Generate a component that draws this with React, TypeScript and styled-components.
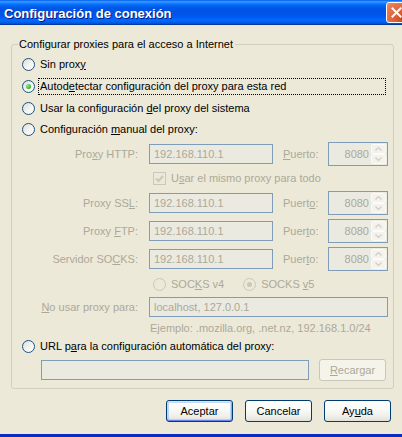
import React from 'react';
import styled, { createGlobalStyle } from 'styled-components';

const GlobalStyle = createGlobalStyle`
  html, body {
    margin: 0;
    padding: 0;
    background: #ECE9D8;
  }
  body {
    font-family: "Liberation Sans", Arial, sans-serif;
    font-size: 11px;
  }
`;

const Dialog = styled.div`
  width: 402px;
  height: 437px;
  box-sizing: border-box;
  overflow: hidden;
  display: flex;
  flex-direction: column;
  background: #ECE9D8;
  border-bottom: 3px solid #0A2BC4;
`;

const TitleBar = styled.div`
  flex-shrink: 0;
  height: 25px;
  display: flex;
  align-items: center;
  justify-content: space-between;
  padding-left: 4px;
  background: linear-gradient(
    180deg,
    #0058EE 0%,
    #3593FF 6%,
    #288EFF 10%,
    #127DFF 14%,
    #036FFC 18%,
    #0262EE 24%,
    #0057E5 32%,
    #0054E3 40%,
    #0055EB 60%,
    #005BF5 70%,
    #026AFE 80%,
    #0062EF 88%,
    #0052D6 94%,
    #0040AB 97%,
    #003092 100%
  );
`;

const Title = styled.span`
  font-family: "Liberation Sans", Arial, sans-serif;
  font-weight: bold;
  font-size: 13px;
  color: #FFFFFF;
  text-shadow: 1px 1px 0 #0A1883;
  padding-top: 1px;
`;

const CloseButton = styled.div`
  flex-shrink: 0;
  width: 21px;
  height: 21px;
  box-sizing: border-box;
  margin-right: -5px;
  border: 1px solid #FFFFFF;
  border-radius: 3px;
  display: flex;
  align-items: center;
  justify-content: center;
  background: radial-gradient(circle at 85% 85%, #C24A1E 0%, #E0643B 45%, #EC8A68 100%);
`;

const Body = styled.div`
  flex: 1;
  display: flex;
  flex-direction: column;
  padding-top: 13px;
`;

const GroupBox = styled.fieldset`
  margin: 0 0 0 11px;
  width: 383px;
  min-width: 0;
  box-sizing: border-box;
  padding: 2px 5px 5px 10px;
  border: 1px solid #D0D0BF;
  border-radius: 3px;
  display: flex;
  flex-direction: column;
`;

const Legend = styled.legend`
  margin-left: -4px;
  padding: 0 2px 0 1px;
  line-height: 13px;
  color: #000000;
`;

const Row = styled.div<{ $h: number; $indent?: number }>`
  height: ${p => p.$h}px;
  display: flex;
  align-items: center;
  padding-left: ${p => p.$indent ?? 0}px;
  flex-shrink: 0;
`;

const RadioCircle = styled.span<{ $disabled?: boolean }>`
  flex-shrink: 0;
  width: 13px;
  height: 13px;
  box-sizing: border-box;
  border-radius: 50%;
  border: 1px solid ${p => (p.$disabled ? '#CAC8BB' : '#1C5180')};
  background: ${p =>
    p.$disabled
      ? '#ECE9D8'
      : 'linear-gradient(135deg, #DCDCD7 0%, #F4F4F1 55%, #FFFFFF 100%)'};
  display: flex;
  align-items: center;
  justify-content: center;
`;

const RadioDot = styled.span<{ $disabled?: boolean }>`
  width: 5px;
  height: 5px;
  border-radius: 50%;
  background: ${p =>
    p.$disabled
      ? '#CAC8BB'
      : 'radial-gradient(circle at 35% 35%, #9EEA9A 0%, #3CBB38 55%, #21A121 100%)'};
`;

const OptionText = styled.span<{ $disabled?: boolean; $focused?: boolean; $grow?: boolean }>`
  margin-left: 3px;
  padding: 1px 1px;
  line-height: 13px;
  border: 1px dotted ${p => (p.$focused ? '#000000' : 'transparent')};
  color: ${p => (p.$disabled ? '#ACA899' : '#000000')};
  white-space: nowrap;
  ${p => (p.$grow ? 'flex: 1; margin-right: 2px;' : '')}
`;

const FieldLabel = styled.span<{ $w?: number; $align?: string }>`
  flex-shrink: 0;
  width: ${p => p.$w ?? 116}px;
  text-align: ${p => p.$align ?? 'right'};
  color: #ACA899;
  white-space: nowrap;
`;

const TextBox = styled.div<{ $w: number; $h?: number }>`
  flex-shrink: 0;
  width: ${p => p.$w}px;
  height: ${p => p.$h ?? 20}px;
  box-sizing: border-box;
  border: 1px solid #7F9DB9;
  background: #EBEAE1;
  color: #ACA899;
  padding-left: 4px;
  display: flex;
  align-items: center;
  white-space: nowrap;
  overflow: hidden;
`;

const Gap = styled.span<{ $w: number }>`
  flex-shrink: 0;
  width: ${p => p.$w}px;
`;

const Spinner = styled.div`
  flex-shrink: 0;
  width: 60px;
  height: 24px;
  box-sizing: border-box;
  border: 1px solid #7F9DB9;
  background: #EBEAE1;
  padding: 1px;
  display: flex;
`;

const SpinValue = styled.span`
  flex: 1;
  text-align: right;
  padding-right: 2px;
  line-height: 20px;
  color: #ACA899;
`;

const SpinButtons = styled.div`
  width: 15px;
  display: flex;
  flex-direction: column;
`;

const SpinButton = styled.div`
  flex: 1;
  box-sizing: border-box;
  border: 1px solid #FBFBF8;
  border-radius: 2px;
  background: #F3F2EC;
  display: flex;
  align-items: center;
  justify-content: center;
`;

const CheckBox = styled.span`
  flex-shrink: 0;
  width: 13px;
  height: 13px;
  box-sizing: border-box;
  border: 1px solid #CAC8BB;
  background: #ECE9D8;
  display: flex;
  align-items: center;
  justify-content: center;
`;

const Hint = styled.span`
  color: #ACA899;
  white-space: nowrap;
`;

const ButtonBar = styled.div`
  display: flex;
  justify-content: flex-end;
  gap: 12px;
  margin-top: 11px;
  padding-right: 11px;
`;

const PushButton = styled.div<{ $default?: boolean; $disabled?: boolean; $w?: number }>`
  flex-shrink: 0;
  width: ${p => p.$w ?? 67}px;
  height: 22px;
  box-sizing: border-box;
  border: 1px solid ${p => (p.$disabled ? '#C9C7BA' : '#003C74')};
  border-radius: 3px;
  display: flex;
  align-items: center;
  justify-content: center;
  color: ${p => (p.$disabled ? '#ACA899' : '#000000')};
  background: ${p =>
    p.$disabled
      ? '#F5F4EA'
      : 'linear-gradient(180deg, #FFFFFF 0%, #FAFAF8 40%, #F0F0EA 75%, #E3E1D8 100%)'};
  box-shadow: ${p =>
    p.$default
      ? 'inset 0 1px 0 #CEE7FF, inset 0 -1px 0 #6982EE, inset 1px 0 0 #B8D4FE, inset -1px 0 0 #89ADE4, inset 0 0 0 2px rgba(160, 192, 245, 0.6)'
      : 'none'};
`;

const SpinArrow = ({ up }: { up?: boolean }) => (
  <svg width="7" height="4" viewBox="0 0 7 4">
    <polyline
      points={up ? '0.5,3.5 3.5,0.5 6.5,3.5' : '0.5,0.5 3.5,3.5 6.5,0.5'}
      fill="none"
      stroke="#D2D0C6"
      strokeWidth="1.3"
    />
  </svg>
);

const Radio = ({ checked, disabled }: { checked?: boolean; disabled?: boolean }) => (
  <RadioCircle $disabled={disabled}>{checked && <RadioDot $disabled={disabled} />}</RadioCircle>
);

const Port = () => (
  <Spinner>
    <SpinValue>8080</SpinValue>
    <SpinButtons>
      <SpinButton>
        <SpinArrow up />
      </SpinButton>
      <SpinButton>
        <SpinArrow />
      </SpinButton>
    </SpinButtons>
  </Spinner>
);

const ProxyRow = ({ label, port }: { label: React.ReactNode; port: React.ReactNode }) => (
  <Row $h={28}>
    <FieldLabel>{label}</FieldLabel>
    <Gap $w={11} />
    <TextBox $w={124}>192.168.110.1</TextBox>
    <Gap $w={10} />
    <FieldLabel $w={45} $align="left">
      {port}
    </FieldLabel>
    <Port />
  </Row>
);

export default function App() {
  return (
    <>
      <GlobalStyle />
      <Dialog>
        <TitleBar>
          <Title>Configuración de conexión</Title>
          <CloseButton>
            <svg width="11" height="11" viewBox="0 0 11 11">
              <path d="M1.5 1.5 L9.5 9.5 M9.5 1.5 L1.5 9.5" stroke="#FFFFFF" strokeWidth="2" strokeLinecap="square" />
            </svg>
          </CloseButton>
        </TitleBar>
        <Body>
          <GroupBox>
            <Legend>Configurar proxies para el acceso a Internet</Legend>

            <Row $h={22}>
              <Radio />
              <OptionText>
                Sin prox<u>y</u>
              </OptionText>
            </Row>
            <Row $h={22}>
              <Radio checked />
              <OptionText $focused $grow>
                Autod<u>e</u>tectar configuración del proxy para esta red
              </OptionText>
            </Row>
            <Row $h={22}>
              <Radio />
              <OptionText>
                Usar la configuración <u>d</u>el proxy del sistema
              </OptionText>
            </Row>
            <Row $h={21}>
              <Radio />
              <OptionText>
                Configuración <u>m</u>anual del proxy:
              </OptionText>
            </Row>

            <ProxyRow
              label={<>Pro<u>x</u>y HTTP:</>}
              port={<><u>P</u>uerto:</>}
            />
            <Row $h={21} $indent={131}>
              <CheckBox>
                <svg width="9" height="8" viewBox="0 0 9 8">
                  <path d="M1 3.5 L3.5 6 L8 1" fill="none" stroke="#CAC8BB" strokeWidth="2" />
                </svg>
              </CheckBox>
              <OptionText $disabled>
                U<u>s</u>ar el mismo proxy para todo
              </OptionText>
            </Row>
            <ProxyRow
              label={<>Proxy SS<u>L</u>:</>}
              port={<>Puert<u>o</u>:</>}
            />
            <ProxyRow
              label={<>Proxy <u>F</u>TP:</>}
              port={<>Puer<u>t</u>o:</>}
            />
            <ProxyRow
              label={<>Servidor SO<u>C</u>KS:</>}
              port={<>Puer<u>t</u>o:</>}
            />

            <Row $h={22} $indent={131}>
              <Radio disabled />
              <OptionText $disabled>
                SOC<u>K</u>S v4
              </OptionText>
              <Gap $w={17} />
              <Radio checked disabled />
              <OptionText $disabled>
                SOCKS <u>v</u>5
              </OptionText>
            </Row>
            <Row $h={24}>
              <FieldLabel>
                <u>N</u>o usar proxy para:
              </FieldLabel>
              <Gap $w={11} />
              <TextBox $w={239}>localhost, 127.0.0.1</TextBox>
            </Row>
            <Row $h={17} $indent={128}>
              <Hint>Ejemplo: .mozilla.org, .net.nz, 192.168.1.0/24</Hint>
            </Row>
            <Row $h={21}>
              <Radio />
              <OptionText>
                URL p<u>a</u>ra la configuración automática del proxy:
              </OptionText>
            </Row>
            <Row $h={26} $indent={19}>
              <TextBox $w={268} />
              <Gap $w={10} />
              <PushButton $disabled $w={67}>
                <span>
                  <u>R</u>ecargar
                </span>
              </PushButton>
            </Row>
          </GroupBox>

          <ButtonBar>
            <PushButton $default>Aceptar</PushButton>
            <PushButton>Cancelar</PushButton>
            <PushButton>
              <span>
                Ay<u>u</u>da
              </span>
            </PushButton>
          </ButtonBar>
        </Body>
      </Dialog>
    </>
  );
}
